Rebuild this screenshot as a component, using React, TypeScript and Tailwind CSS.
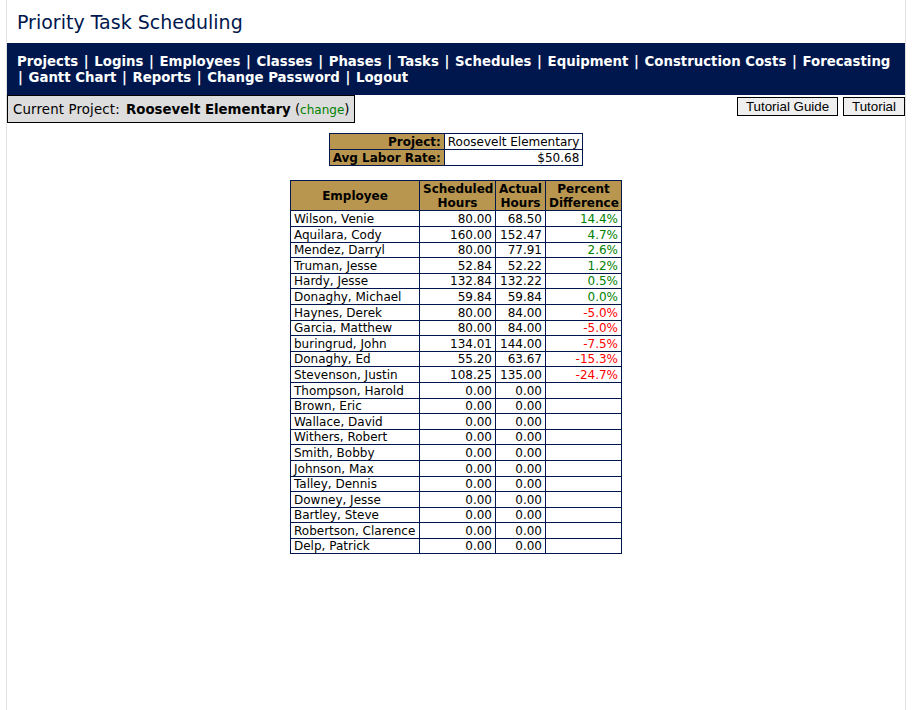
import React from "react";

const NAV = [
  "Projects",
  "Logins",
  "Employees",
  "Classes",
  "Phases",
  "Tasks",
  "Schedules",
  "Equipment",
  "Construction Costs",
  "Forecasting",
  "Gantt Chart",
  "Reports",
  "Change Password",
  "Logout",
];

type Row = { name: string; sched: string; actual: string; pct?: string; color?: string };

const ROWS: Row[] = [
  { name: "Wilson, Venie", sched: "80.00", actual: "68.50", pct: "14.4%", color: "text-[#008000]" },
  { name: "Aquilara, Cody", sched: "160.00", actual: "152.47", pct: "4.7%", color: "text-[#008000]" },
  { name: "Mendez, Darryl", sched: "80.00", actual: "77.91", pct: "2.6%", color: "text-[#008000]" },
  { name: "Truman, Jesse", sched: "52.84", actual: "52.22", pct: "1.2%", color: "text-[#008000]" },
  { name: "Hardy, Jesse", sched: "132.84", actual: "132.22", pct: "0.5%", color: "text-[#008000]" },
  { name: "Donaghy, Michael", sched: "59.84", actual: "59.84", pct: "0.0%", color: "text-[#008000]" },
  { name: "Haynes, Derek", sched: "80.00", actual: "84.00", pct: "-5.0%", color: "text-[#ff0000]" },
  { name: "Garcia, Matthew", sched: "80.00", actual: "84.00", pct: "-5.0%", color: "text-[#ff0000]" },
  { name: "buringrud, John", sched: "134.01", actual: "144.00", pct: "-7.5%", color: "text-[#ff0000]" },
  { name: "Donaghy, Ed", sched: "55.20", actual: "63.67", pct: "-15.3%", color: "text-[#ff0000]" },
  { name: "Stevenson, Justin", sched: "108.25", actual: "135.00", pct: "-24.7%", color: "text-[#ff0000]" },
  { name: "Thompson, Harold", sched: "0.00", actual: "0.00" },
  { name: "Brown, Eric", sched: "0.00", actual: "0.00" },
  { name: "Wallace, David", sched: "0.00", actual: "0.00" },
  { name: "Withers, Robert", sched: "0.00", actual: "0.00" },
  { name: "Smith, Bobby", sched: "0.00", actual: "0.00" },
  { name: "Johnson, Max", sched: "0.00", actual: "0.00" },
  { name: "Talley, Dennis", sched: "0.00", actual: "0.00" },
  { name: "Downey, Jesse", sched: "0.00", actual: "0.00" },
  { name: "Bartley, Steve", sched: "0.00", actual: "0.00" },
  { name: "Robertson, Clarence", sched: "0.00", actual: "0.00" },
  { name: "Delp, Patrick", sched: "0.00", actual: "0.00" },
];

export default function App() {
  return (
    <div className="h-[710px] overflow-hidden bg-white font-['DejaVu_Sans',Verdana,sans-serif] text-[12px] leading-[15px] text-black">
      <div className="mx-[6px] h-full w-[900px] border-x border-[#e0e0e0]">
        <div className="h-[43px] pl-[10px] pt-[10px] text-[19px] leading-[24px] text-[#00174d]">
          Priority Task Scheduling
        </div>

        {/* menu */}
        <div className="h-[52px] bg-[#00174d] px-[10px] pt-[11px] text-[13.3px] leading-[16px] font-bold text-white">
          {NAV.map((n, i) => (
            <React.Fragment key={n}>
              {i > 0 && <span className="mx-[1px]">|</span>} <a>{n}</a>{" "}
            </React.Fragment>
          ))}
        </div>

        <div className="flex items-start justify-between">
          <div className="h-[28px] w-[348px] border border-black bg-[#dddddd] pl-[5px] pt-[6px] text-[13.33px] leading-[15px]">
            <span className="tracking-[0.15px]">Current Project:</span> <b className="ml-[2px]">Roosevelt Elementary</b> (<span className="text-[12px] text-[#008000]">change</span>)
          </div>
          <div className="mt-[2px] flex gap-[5px] font-['Liberation_Sans',Arial,sans-serif] text-[13.33px] leading-[15px]">
            <button className="h-[19px] w-[101px] border border-black bg-[#efefef]">Tutorial Guide</button>
            <button className="h-[19px] w-[62px] border border-black bg-[#efefef]">Tutorial</button>
          </div>
        </div>

        <table className="mx-auto mt-[10px] border-collapse border border-[#00174d] leading-[14px]">
          <tbody>
            <tr>
              <th className="border border-[#00174d] bg-[#b8964f] px-[3px] pt-[1px] text-right">Project:</th>
              <td className="border border-[#00174d] px-[3px] pt-[1px]">Roosevelt Elementary</td>
            </tr>
            <tr>
              <th className="border border-[#00174d] bg-[#b8964f] px-[3px] pt-[1px] text-right">Avg Labor Rate:</th>
              <td className="border border-[#00174d] px-[3px] pt-[1px] text-right">$50.68</td>
            </tr>
          </tbody>
        </table>

        <table className="mx-auto mt-[14px] w-[331px] table-fixed border-collapse border border-[#00174d] leading-[13px]">
          <thead>
            <tr className="bg-[#b8964f] leading-[14.2px]">
              <th className="w-[129px] border border-[#00174d] px-[3px] pt-[1px]">Employee</th>
              <th className="w-[76px] border border-[#00174d] px-[3px] pt-[1px]">Scheduled<br />Hours</th>
              <th className="w-[50px] border border-[#00174d] px-[3px] pt-[1px]">Actual<br />Hours</th>
              <th className="w-[76px] border border-[#00174d] px-[3px] pt-[1px]">Percent<br />Difference</th>
            </tr>
          </thead>
          <tbody>
            {ROWS.map((r) => (
              <tr key={r.name}>
                <td className="border border-[#00174d] px-[3px] pt-[1.6px]">{r.name}</td>
                <td className="border border-[#00174d] px-[3px] pt-[1.6px] text-right">{r.sched}</td>
                <td className="border border-[#00174d] px-[3px] pt-[1.6px] text-right">{r.actual}</td>
                <td className={`border border-[#00174d] px-[3px] pt-[1.6px] text-right ${r.color ?? ""}`}>{r.pct}</td>
              </tr>
            ))}
          </tbody>
        </table>
      </div>
    </div>
  );
}
